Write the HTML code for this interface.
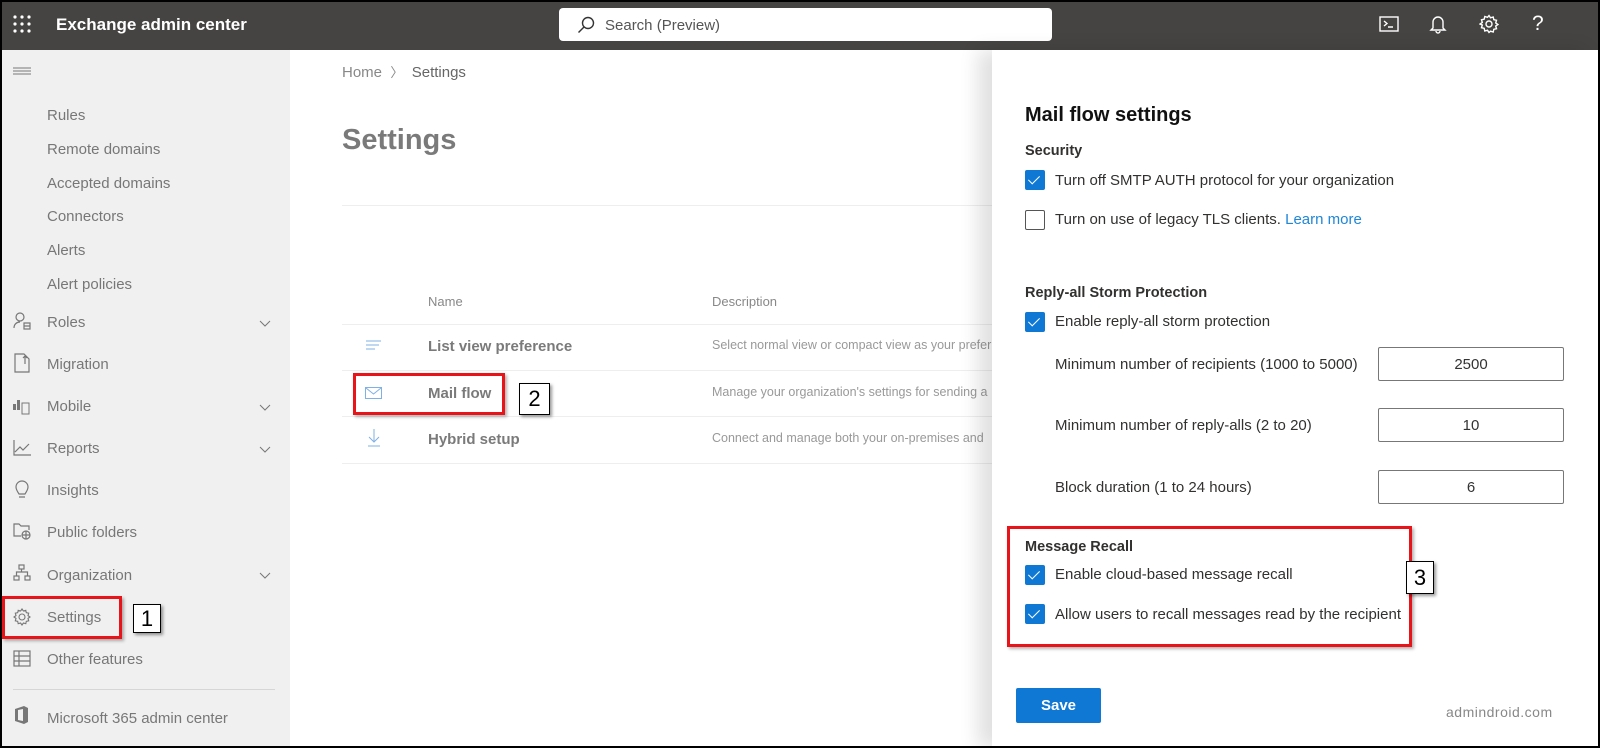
<!DOCTYPE html>
<html><head><meta charset="utf-8"><style>
*{box-sizing:border-box;margin:0;padding:0}
body{width:1600px;height:748px;overflow:hidden;position:relative;font-family:"Liberation Sans",sans-serif;background:#fff;}
.frame{position:absolute;inset:0;border:2px solid #000;z-index:50;pointer-events:none}
.hdr{position:absolute;left:0;top:0;width:1600px;height:50px;background:#464442;color:#fff}
.hdr .t{position:absolute;left:56px;top:15px;font-size:17px;font-weight:bold}
.search{position:absolute;left:559px;top:8px;width:493px;height:33px;background:#fff;border-radius:4px;color:#555;font-size:15px;padding:9px 0 0 46px}
.side{position:absolute;left:0;top:50px;width:290px;height:698px;background:#f0f0f0;color:#777;font-size:15px}
.side .it{position:absolute;left:47px}
.side svg{position:absolute}
.chev{position:absolute;left:259px;width:12px;height:12px}
.main{position:absolute;left:290px;top:50px;width:710px;height:698px;background:#fff}
.gray{color:#7a7a7a}
.panel{position:absolute;left:992px;top:50px;width:608px;height:698px;background:#fff;box-shadow:-14px 0 18px rgba(0,0,0,0.12)}
.p{position:absolute;color:#323130;font-size:15px}
.cb{position:absolute;left:1025px;width:20px;height:20px;border-radius:2px;background:#0f78d4}
.cb.off{background:#fff;border:1px solid #555}
.inp{position:absolute;left:1378px;width:186px;height:34px;border:1px solid #777;border-radius:2px;text-align:center;font-size:15px;padding-top:8px;color:#333;background:#fff}
.red{position:absolute;border:3px solid #e8141a;box-shadow:2px 2px 3px rgba(0,0,0,.3)}
.num{position:absolute;border:1.5px solid #000;background:#fff;font-size:22px;text-align:center;box-shadow:2px 2px 3px rgba(0,0,0,.4);color:#000}
</style></head><body>
<div class="hdr">
<svg style="position:absolute;left:13px;top:15px" width="18" height="18"><g fill="#fff"><circle cx="2" cy="2" r="1.6"/><circle cx="9" cy="2" r="1.6"/><circle cx="16" cy="2" r="1.6"/><circle cx="2" cy="9" r="1.6"/><circle cx="9" cy="9" r="1.6"/><circle cx="16" cy="9" r="1.6"/><circle cx="2" cy="16" r="1.6"/><circle cx="9" cy="16" r="1.6"/><circle cx="16" cy="16" r="1.6"/></g></svg>
<div class="t">Exchange admin center</div>
<div class="search"><svg style="position:absolute;left:18px;top:8px" width="18" height="18" fill="none" stroke="#333" stroke-width="1.4"><circle cx="11" cy="7" r="5.5"/><path d="M7 11L1.5 16.5"/></svg>Search (Preview)</div>
<svg style="position:absolute;left:1379px;top:16px" width="20" height="16" fill="none" stroke="#fff" stroke-width="1.4"><rect x="1" y="1" width="18" height="14"/><path d="M5 5l3 2.5-3 2.5M9 11h5"/></svg>
<svg style="position:absolute;left:1429px;top:14px" width="18" height="20" fill="none" stroke="#fff" stroke-width="1.4"><path d="M4 14V8a5 5 0 0110 0v6l2 2H2z M7 17a2 2 0 004 0"/></svg>
<svg style="position:absolute;left:1479px;top:14px" width="20" height="20" fill="none" stroke="#fff" stroke-width="1.4"><circle cx="10" cy="10" r="3"/><path d="M10 1.5l1.5 2.3 2.7-.8.6 2.7 2.7.6-.8 2.7 2.3 1.5-2.3 1.5.8 2.7-2.7.6-.6 2.7-2.7-.8L10 18.5l-1.5-2.3-2.7.8-.6-2.7-2.7-.6.8-2.7L1 10l2.3-1.5-.8-2.7 2.7-.6.6-2.7 2.7.8z"/></svg>
<div style="position:absolute;left:1532px;top:12px;font-size:21px">?</div>
</div>
<div class="side">
<svg style="left:13px;top:17px" width="18" height="8" stroke="#777"><path d="M0 1h18M0 4h18M0 7h18"/></svg>
<div class="it" style="top:57px">Rules</div>
<div class="it" style="top:91px">Remote domains</div>
<div class="it" style="top:125px">Accepted domains</div>
<div class="it" style="top:158px">Connectors</div>
<div class="it" style="top:192px">Alerts</div>
<div class="it" style="top:226px">Alert policies</div>
<svg style="left:13px;top:262px" width="18" height="18" fill="none" stroke="#777" stroke-width="1.2"><circle cx="7" cy="5" r="4"/><path d="M1 16c0-4 3-6 6-6M11 11h6v6h-6zM11 14h6"/></svg>
<div class="it" style="top:264px">Roles</div><svg class="chev" style="top:268px" fill="none" stroke="#777"><path d="M1 3l5 5 5-5"/></svg>
<svg style="left:14px;top:303px" width="16" height="20" fill="none" stroke="#777" stroke-width="1.2"><path d="M1 1h9l5 5v13H1zM9 5l2-2 2 2M11 3v8"/></svg>
<div class="it" style="top:306px">Migration</div>
<svg style="left:13px;top:347px" width="18" height="18" fill="#777"><rect x="0" y="7" width="3" height="6"/><rect x="4" y="3" width="3" height="10"/><rect x="9" y="6" width="7" height="11" fill="none" stroke="#777"/></svg>
<div class="it" style="top:348px">Mobile</div><svg class="chev" style="top:352px" fill="none" stroke="#777"><path d="M1 3l5 5 5-5"/></svg>
<svg style="left:13px;top:390px" width="18" height="16" fill="none" stroke="#777" stroke-width="1.2"><path d="M1 0v15h17M2 12l5-5 3 3 6-6"/></svg>
<div class="it" style="top:390px">Reports</div><svg class="chev" style="top:394px" fill="none" stroke="#777"><path d="M1 3l5 5 5-5"/></svg>
<svg style="left:15px;top:430px" width="14" height="20" fill="none" stroke="#777" stroke-width="1.2"><path d="M4 14C2 11 1 9 1 7a6 6 0 0112 0c0 2-1 4-3 7zM4 17h6"/></svg>
<div class="it" style="top:432px">Insights</div>
<svg style="left:13px;top:472px" width="18" height="18" fill="none" stroke="#777" stroke-width="1.2"><path d="M8 14H1V2h5l2 2h8v4"/><circle cx="13" cy="13" r="4"/><path d="M9 13h8M13 9v8"/></svg>
<div class="it" style="top:474px">Public folders</div>
<svg style="left:13px;top:514px" width="18" height="18" fill="none" stroke="#777" stroke-width="1.2"><rect x="6" y="1" width="5" height="4"/><rect x="1" y="12" width="5" height="4"/><rect x="12" y="12" width="5" height="4"/><path d="M8.5 5v3M3.5 12V8h11v4"/></svg>
<div class="it" style="top:517px">Organization</div><svg class="chev" style="top:520px" fill="none" stroke="#777"><path d="M1 3l5 5 5-5"/></svg>
<svg style="left:13px;top:558px" width="18" height="18" fill="none" stroke="#777" stroke-width="1.1"><circle cx="9" cy="9" r="3"/><path d="M9 1l1.4 2 2.4-.7.5 2.4 2.4.5-.7 2.4L17 9l-2 1.4.7 2.4-2.4.5-.5 2.4-2.4-.7L9 17l-1.4-2-2.4.7-.5-2.4-2.4-.5.7-2.4L1 9l2-1.4-.7-2.4 2.4-.5.5-2.4 2.4.7z"/></svg>
<div class="it" style="top:559px">Settings</div>
<svg style="left:13px;top:600px" width="18" height="17" fill="none" stroke="#777" stroke-width="1.2"><rect x="1" y="1" width="16" height="15"/><path d="M1 6h16M1 11h16M6 1v15"/></svg>
<div class="it" style="top:601px">Other features</div>
<div style="position:absolute;left:13px;top:639px;width:262px;height:1px;background:#d6d6d6"></div>
<svg style="left:15px;top:656px" width="14" height="18" fill="#777"><path d="M0 3l9-3 4 2v14l-4 2-9-3zM3 4v10l5 1V3z"/></svg>
<div class="it" style="top:660px">Microsoft 365 admin center</div>
</div>
<div class="red" style="left:2px;top:596px;width:120px;height:43px"></div>
<div class="num" style="left:133px;top:604px;width:28px;height:29px;padding-top:1px">1</div>
<div class="main">
<div style="position:absolute;left:52px;top:12px;font-size:15px;color:#888">Home &nbsp;<span style="font-size:13px">〉</span>&nbsp; <span style="color:#666">Settings</span></div>
<div style="position:absolute;left:52px;top:74px;font-size:29px;font-weight:bold;color:#7a7a7a">Settings</div>
<div style="position:absolute;left:52px;top:155px;width:660px;height:1px;background:#eee"></div>
<div style="position:absolute;left:138px;top:244px;font-size:13px;color:#888">Name</div>
<div style="position:absolute;left:422px;top:244px;font-size:13px;color:#888">Description</div>
<div style="position:absolute;left:52px;top:274px;width:660px;height:1px;background:#eee"></div>
<div style="position:absolute;left:52px;top:320px;width:660px;height:1px;background:#eee"></div>
<div style="position:absolute;left:52px;top:366px;width:660px;height:1px;background:#eee"></div>
<div style="position:absolute;left:52px;top:413px;width:660px;height:1px;background:#eee"></div>
<svg style="position:absolute;left:76px;top:290px" width="16" height="12" stroke="#7fb0e6"><path d="M0 1h15M0 5h13M0 9h9"/></svg>
<div style="position:absolute;left:138px;top:288px;font-size:15px;font-weight:bold;color:#7a7a7a">List view preference</div>
<div style="position:absolute;left:422px;top:288px;font-size:12.5px;color:#999;white-space:nowrap">Select normal view or compact view as your prefer</div>
<svg style="position:absolute;left:75px;top:337px" width="18" height="13" fill="none" stroke="#7fb0e6"><rect x=".5" y=".5" width="16" height="11"/><path d="M1 1l7.5 6 7.5-6"/></svg>
<div style="position:absolute;left:138px;top:335px;font-size:15px;font-weight:bold;color:#7a7a7a">Mail flow</div>
<div style="position:absolute;left:422px;top:335px;font-size:12.5px;color:#999;white-space:nowrap">Manage your organization's settings for sending a</div>
<svg style="position:absolute;left:78px;top:379px" width="12" height="18" fill="none" stroke="#7fb0e6"><path d="M6 0v13M1 8l5 5 5-5M0 17h12"/></svg>
<div style="position:absolute;left:138px;top:381px;font-size:15px;font-weight:bold;color:#7a7a7a">Hybrid setup</div>
<div style="position:absolute;left:422px;top:381px;font-size:12.5px;color:#999;white-space:nowrap">Connect and manage both your on-premises and</div>
</div>
<div class="red" style="left:353px;top:373px;width:152px;height:42px"></div>
<div class="num" style="left:519px;top:383px;width:31px;height:32px;padding-top:2px">2</div>
<div class="panel"></div>
<div class="p" style="left:1025px;top:104px;font-size:20px;font-weight:bold;color:#111">Mail flow settings</div>
<div class="p" style="left:1025px;top:143px;font-weight:bold;font-size:14.5px">Security</div>
<div class="cb" style="top:170px"></div><div class="p" style="left:1055px;top:172px">Turn off SMTP AUTH protocol for your organization</div>
<div class="cb off" style="top:210px"></div><div class="p" style="left:1055px;top:211px">Turn on use of legacy TLS clients. <span style="color:#1f86d8">Learn more</span></div>
<div class="p" style="left:1025px;top:285px;font-weight:bold;font-size:14.5px">Reply-all Storm Protection</div>
<div class="cb" style="top:312px"></div><div class="p" style="left:1055px;top:313px">Enable reply-all storm protection</div>
<div class="p" style="left:1055px;top:356px">Minimum number of recipients (1000 to 5000)</div><div class="inp" style="top:347px">2500</div>
<div class="p" style="left:1055px;top:417px">Minimum number of reply-alls (2 to 20)</div><div class="inp" style="top:408px">10</div>
<div class="p" style="left:1055px;top:479px">Block duration (1 to 24 hours)</div><div class="inp" style="top:470px">6</div>
<div class="red" style="left:1007px;top:526px;width:405px;height:121px"></div>
<div class="p" style="left:1025px;top:539px;font-weight:bold;font-size:14.5px">Message Recall</div>
<div class="cb" style="top:565px"></div><div class="p" style="left:1055px;top:566px">Enable cloud-based message recall</div>
<div class="cb" style="top:604px"></div><div class="p" style="left:1055px;top:606px">Allow users to recall messages read by the recipient</div>
<div class="num" style="left:1406px;top:561px;width:28px;height:33px;padding-top:3px">3</div>
<div style="position:absolute;left:1016px;top:688px;width:85px;height:35px;background:#0f78d4;border-radius:2px;color:#fff;font-weight:bold;font-size:15px;text-align:center;padding-top:9px">Save</div>
<div style="position:absolute;left:1446px;top:704px;font-size:14px;color:#888;letter-spacing:.5px">admindroid.com</div>
<svg style="position:absolute;left:0;top:0;width:0;height:0"></svg>
<div class="frame"></div>
<style>.cb:not(.off)::after{content:"";position:absolute;left:6px;top:3px;width:5px;height:10px;border:solid #fff;border-width:0 1.5px 1.5px 0;transform:rotate(45deg)}</style>
</body></html>
